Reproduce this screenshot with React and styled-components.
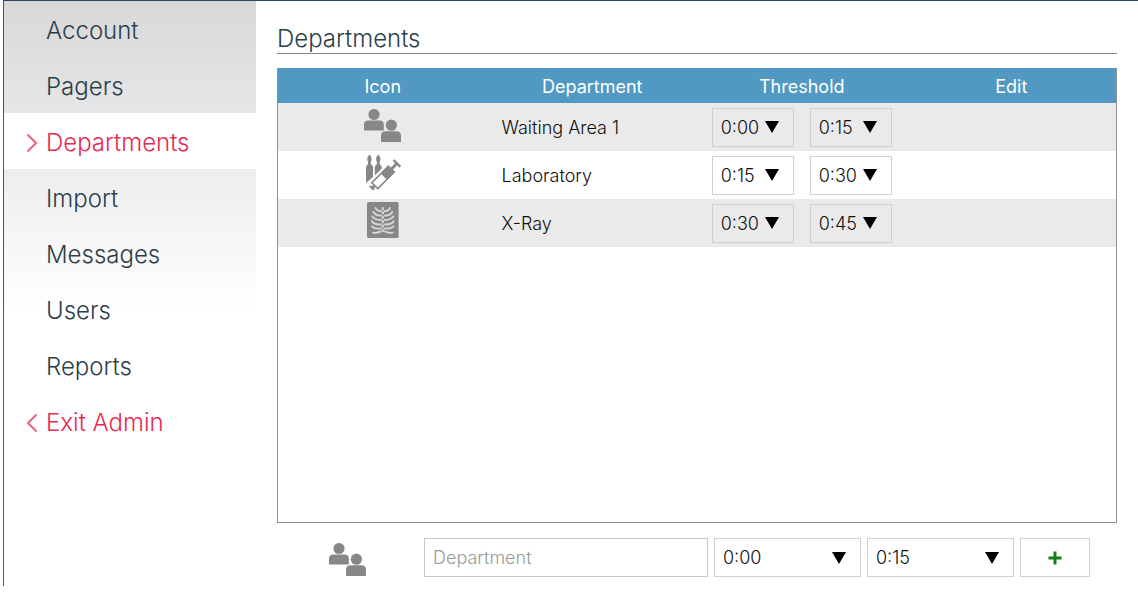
import React, { useState } from 'react';
import styled, { createGlobalStyle } from 'styled-components';

const times = ['0:00', '0:15', '0:30', '0:45'];

const navItems = [
  { label: 'Account' },
  { label: 'Pagers' },
  { label: 'Departments', active: true },
  { label: 'Import' },
  { label: 'Messages' },
  { label: 'Users' },
  { label: 'Reports' },
  { label: 'Exit Admin', exit: true },
];

const WaitingIcon = () => (
  <Icon viewBox="0 0 37 37" aria-hidden="true">
    <circle cx="10" cy="9.5" r="5.6" />
    <path d="M0 25.6V19.6Q0 15.4 4.4 15.4H15.6Q19.8 15.4 19.8 19.6V25.6Z" />
    <circle cx="27.4" cy="20.2" r="5.6" />
    <path d="M17 37V31Q17 26.2 21.6 26.2H32.4Q37 26.2 37 31V37Z" />
  </Icon>
);

const LabIcon = () => (
  <Icon viewBox="0 0 37 37" aria-hidden="true">
    <path d="M5.4 1.4Q7.6 3.4 7.6 6Q7.6 8 6.8 9V11L9 13.6V24L2 30V13.6L4.1 11V9Q3.3 8 3.3 6Q3.3 3.4 5.4 1.4Z" />
    <path d="M14.2 1.4Q16.4 3.4 16.4 6Q16.4 8 15.6 9V11L17.8 13.6V15.4L10.8 22.4V13.6L12.9 11V9Q12.1 8 12.1 6Q12.1 3.4 14.2 1.4Z" />
    <g transform="translate(7.4 36) rotate(-45)">
      <path d="M0 -3.4H2V-1.4H4V-5H29V-1.5H35V-4.8H37.4V4.8H35V1.5H29V5H4V1.4H2V3.4H0Z" />
      <path d="M5.6 -3.4H17.6V3.4H5.6Z" fill="#fff" />
    </g>
  </Icon>
);

const XrayIcon = () => (
  <Icon viewBox="0 0 37 37" aria-hidden="true">
    <rect x="3" y="1" width="31.6" height="36" rx="1.6" />
    <g fill="none" stroke="#d6d6d6" strokeWidth="1.9" strokeLinecap="round">
      <path d="M18.8 7V31" strokeWidth="2.2" strokeDasharray="1.2 3.2" />
      <path d="M11.6 7Q12.6 10 17 10.2M26 7Q25 10 20.6 10.2" />
      <path d="M9.4 10.8Q10.8 14.4 17 14.6M28.2 10.8Q26.8 14.4 20.6 14.6" />
      <path d="M8.4 15.4Q10.2 19 17 19M29.2 15.4Q27.4 19 20.6 19" />
      <path d="M8 20.2Q10 23.8 17 23.4M29.6 20.2Q27.6 23.8 20.6 23.4" />
      <path d="M8 25.4Q11 28.4 17 27.4M29.6 25.4Q26.6 28.4 20.6 27.4" />
      <path d="M9 31.6Q12.6 32.6 16.6 30.4M28.6 31.6Q25 32.6 21 30.4" />
    </g>
  </Icon>
);

const Arrow = () => (
  <ArrowIcon viewBox="0 0 14 12" aria-hidden="true">
    <path d="M0 0H14L7 12Z" />
  </ArrowIcon>
);

const TimeSelect = ({ label, value, width }) => {
  const [time, setTime] = useState(value);
  return (
    <SelectBox $width={width}>
      <Select aria-label={label} value={time} onChange={(e) => setTime(e.target.value)}>
        {times.map((t) => (
          <option key={t}>{t}</option>
        ))}
      </Select>
      <Arrow />
    </SelectBox>
  );
};

const departments = [
  { name: 'Waiting Area 1', icon: <WaitingIcon />, from: '0:00', to: '0:15' },
  { name: 'Laboratory', icon: <LabIcon />, from: '0:15', to: '0:30' },
  { name: 'X-Ray', icon: <XrayIcon />, from: '0:30', to: '0:45' },
];

const App = () => {
  const [name, setName] = useState('');
  return (
    <Page>
      <GlobalStyle />
      <Sidebar>
        {navItems.map((item) => (
          <NavLink key={item.label} href="#" $active={item.active} $red={item.active || item.exit}>
            <Chevron viewBox="0 0 12 20" aria-hidden="true">
              {item.active && <path d="M1.5 1.5L10 10L1.5 18.5" />}
              {item.exit && <path d="M10.5 1.5L2 10L10.5 18.5" />}
            </Chevron>
            {item.label}
          </NavLink>
        ))}
      </Sidebar>
      <Main>
        <Heading>Departments</Heading>
        <TableBox>
          <Table>
            <thead>
              <tr>
                <HeadCell>Icon</HeadCell>
                <HeadCell>Department</HeadCell>
                <HeadCell>Threshold</HeadCell>
                <HeadCell>Edit</HeadCell>
              </tr>
            </thead>
            <tbody>
              {departments.map((d) => (
                <Row key={d.name}>
                  <IconCell>{d.icon}</IconCell>
                  <NameCell>{d.name}</NameCell>
                  <Cell>
                    <Thresholds>
                      <TimeSelect label={`${d.name} from`} value={d.from} width="82px" />
                      <TimeSelect label={`${d.name} to`} value={d.to} width="82px" />
                    </Thresholds>
                  </Cell>
                  <Cell />
                </Row>
              ))}
            </tbody>
          </Table>
        </TableBox>
        <Form onSubmit={(e) => e.preventDefault()}>
          <IconButton type="button" aria-label="Choose icon">
            <WaitingIcon />
          </IconButton>
          <Input
            aria-label="Department"
            placeholder="Department"
            value={name}
            onChange={(e) => setName(e.target.value)}
          />
          <TimeSelect label="Threshold from" value="0:00" width="147px" />
          <TimeSelect label="Threshold to" value="0:15" width="147px" />
          <AddButton type="submit" aria-label="Add department">
            <svg width="14" height="14" viewBox="0 0 14 14" aria-hidden="true">
              <path d="M7 0.5V13.5M0.5 7H13.5" stroke="#128012" strokeWidth="3" />
            </svg>
          </AddButton>
        </Form>
      </Main>
    </Page>
  );
};

const GlobalStyle = createGlobalStyle`
  * {
    box-sizing: border-box;
  }

  body {
    margin: 0;
    background: #fff;
    font-family: Inter, 'Liberation Sans', sans-serif;
    font-weight: 300;
  }

  input, select, button {
    font: inherit;
  }
`;

const Page = styled.div`
  display: flex;
  margin-left: 3px;
  border-top: 1px solid #2f4560;
  border-left: 1px solid #555;
`;

const Sidebar = styled.nav`
  flex: 0 0 252px;
  background: linear-gradient(#d8d8d8, #fff 310px);
`;

const NavLink = styled.a`
  display: flex;
  align-items: center;
  gap: 8px;
  height: 56px;
  padding: 3px 0 0 22px;
  font-size: 24px;
  text-decoration: none;
  color: ${(props) => (props.$red ? '#e8294f' : '#2b3f4a')};
  background: ${(props) => (props.$active ? '#fff' : 'transparent')};
`;

const Chevron = styled.svg`
  width: 12px;
  height: 20px;
  fill: none;
  stroke: #f0627c;
  stroke-width: 2;
`;

const Main = styled.main`
  flex: 1;
  min-width: 0;
  padding: 20px 21px 9px;
`;

const Heading = styled.h1`
  margin: 0 0 14px;
  padding-top: 4px;
  border-bottom: 1px solid #888;
  font-size: 24px;
  font-weight: 300;
  line-height: 28px;
  color: #2b3f4a;
`;

const TableBox = styled.div`
  min-height: 455px;
  border: 1px solid #8b9294;
  border-top: none;
`;

const Table = styled.table`
  width: 100%;
  table-layout: fixed;
  border-collapse: collapse;
  font-size: 18px;
  color: #111;
`;

const HeadCell = styled.th`
  height: 35px;
  padding: 2px 0 0;
  background: #5199c3;
  color: #fff;
  font-weight: 400;
`;

const Row = styled.tr`
  height: 48px;

  &:nth-child(odd) {
    background: #eaeaea;
  }
`;

const Cell = styled.td`
  padding: 0;
`;

const IconCell = styled(Cell)`
  padding-top: 2px;
  text-align: center;
  vertical-align: top;
`;

const NameCell = styled(Cell)`
  padding-left: 14px;
`;

const Thresholds = styled.div`
  display: flex;
  justify-content: center;
  gap: 16px;
`;

const Icon = styled.svg`
  width: 37px;
  height: 37px;
  fill: #878787;
`;

const SelectBox = styled.div`
  display: grid;
  align-items: center;
  width: ${(props) => props.$width};
`;

const Select = styled.select`
  grid-area: 1 / 1;
  width: 100%;
  height: 39px;
  padding: 0 8px;
  appearance: none;
  border: 1px solid #d0d0d0;
  border-radius: 0;
  background: transparent;
  font-size: 18px;
  color: #111;
`;

const ArrowIcon = styled.svg`
  grid-area: 1 / 1;
  justify-self: end;
  width: 14px;
  height: 12px;
  margin-right: 15px;
  fill: #000;
  pointer-events: none;
`;

const Form = styled.form`
  display: flex;
  gap: 6px;
  padding: 15px 27px 0 0;
`;

const IconButton = styled.button`
  display: flex;
  align-items: center;
  justify-content: center;
  width: 141px;
  height: 39px;
  padding: 0;
  border: none;
  background: none;
`;

const Input = styled.input`
  flex: 1;
  min-width: 0;
  height: 39px;
  padding: 0 8px;
  border: 1px solid #c8c8c8;
  font-size: 18px;
  color: #111;

  &::placeholder {
    color: #999;
  }
`;

const AddButton = styled.button`
  display: flex;
  align-items: center;
  justify-content: center;
  width: 70px;
  height: 39px;
  padding: 0;
  border: 1px solid #d0d0d0;
  background: #fff;
`;

export default App;
